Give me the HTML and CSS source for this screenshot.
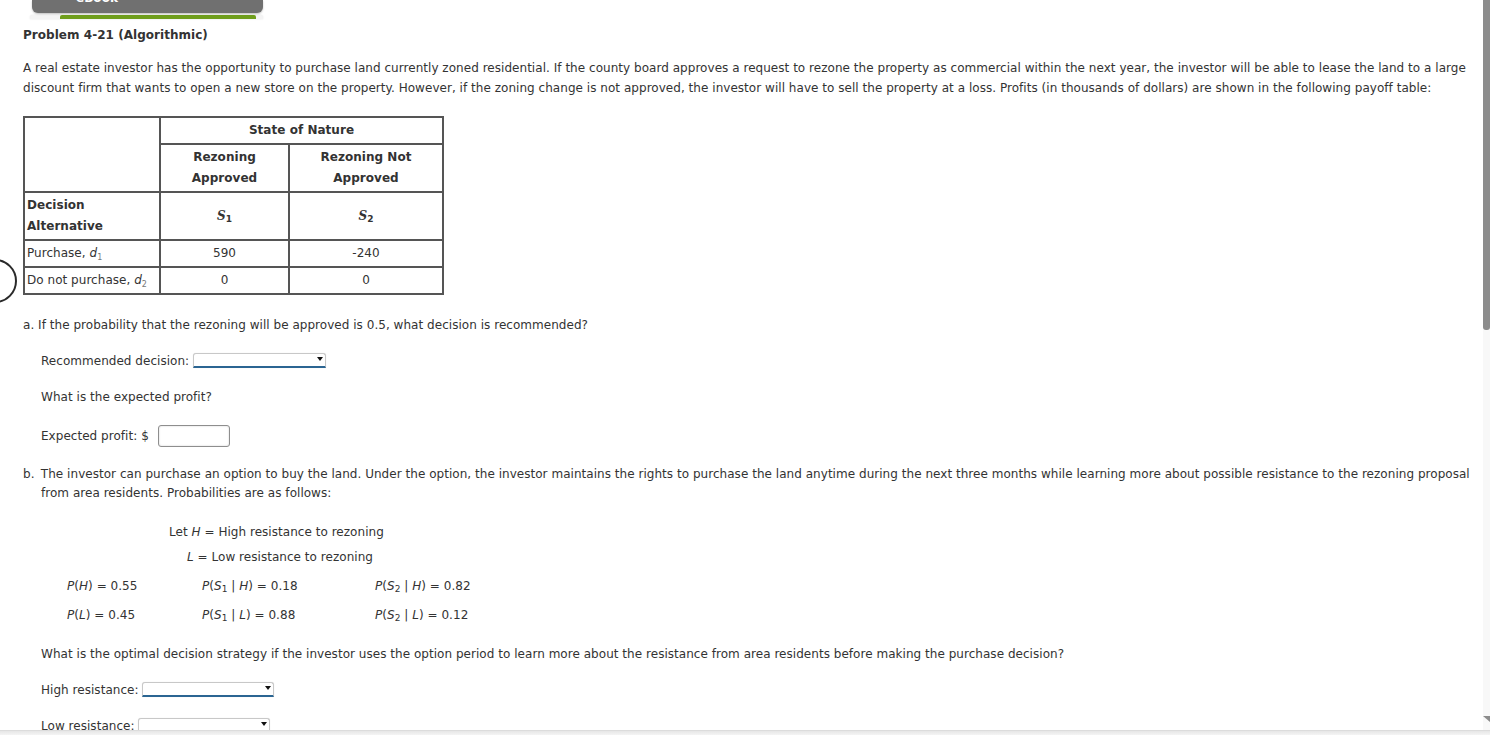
FILE: index.html
```html
<!DOCTYPE html>
<html>
<head>
<meta charset="utf-8">
<link rel="stylesheet" href="styles.css">
</head>
<body>
<div class="topbar">
  <div class="ebook-tab"><span class="ebook-label">eBook</span></div>
  <div class="tab-shelf"><div class="green-bar"></div></div>
</div>
<div class="circle-mark"></div>
<main class="content">
  <h1 class="title">Problem 4-21 (Algorithmic)</h1>
  <p class="intro">A real estate investor has the opportunity to purchase land currently zoned residential. If the county board approves a request to rezone the property as commercial within the next year, the investor will be able to lease the land to a large discount firm that wants to open a new store on the property. However, if the zoning change is not approved, the investor will have to sell the property at a loss. Profits (in thousands of dollars) are shown in the following payoff table:</p>

  <table class="payoff">
    <colgroup><col class="c1"><col class="c2"><col class="c3"></colgroup>
    <tr class="r-short">
      <td rowspan="2"></td>
      <th colspan="2">State of Nature</th>
    </tr>
    <tr class="r-tall">
      <th>Rezoning<br>Approved</th>
      <th>Rezoning Not<br>Approved</th>
    </tr>
    <tr class="r-tall">
      <th class="left">Decision<br>Alternative</th>
      <th><span class="mvar">S</span><sub class="msub">1</sub></th>
      <th><span class="mvar">S</span><sub class="msub">2</sub></th>
    </tr>
    <tr class="r-short">
      <td class="left">Purchase, <i class="dvar">d</i><sub class="dsub">1</sub></td>
      <td>590</td>
      <td>-240</td>
    </tr>
    <tr class="r-short">
      <td class="left">Do not purchase, <i class="dvar">d</i><sub class="dsub">2</sub></td>
      <td>0</td>
      <td>0</td>
    </tr>
  </table>

  <p class="part">a. If the probability that the rezoning will be approved is 0.5, what decision is recommended?</p>
  <div class="indent">
    <p class="q q-rec">Recommended decision: <span class="select sel-rec"></span></p>
    <p class="q q-what">What is the expected profit?</p>
    <p class="q q-exp">Expected profit: $ <span class="textbox"></span></p>
  </div>

  <p class="part part-b"><span class="pl">b.</span> The investor can purchase an option to buy the land. Under the option, the investor maintains the rights to purchase the land anytime during the next three months while learning more about possible resistance to the rezoning proposal from area residents. Probabilities are as follows:</p>

  <div class="defs">
    <p class="def def-h">Let <i>H</i> = High resistance to rezoning</p>
    <p class="def def-l"><i>L</i> = Low resistance to rezoning</p>
  </div>

  <div class="probs">
    <span><i>P</i>(<i>H</i>) = 0.55</span>
    <span><i>P</i>(<i>S</i><sub class="psub">1</sub> | <i>H</i>) = 0.18</span>
    <span><i>P</i>(<i>S</i><sub class="psub">2</sub> | <i>H</i>) = 0.82</span>
    <span><i>P</i>(<i>L</i>) = 0.45</span>
    <span><i>P</i>(<i>S</i><sub class="psub">1</sub> | <i>L</i>) = 0.88</span>
    <span><i>P</i>(<i>S</i><sub class="psub">2</sub> | <i>L</i>) = 0.12</span>
  </div>

  <div class="indent">
    <p class="q q-opt">What is the optimal decision strategy if the investor uses the option period to learn more about the resistance from area residents before making the purchase decision?</p>
    <p class="q q-high">High resistance: <span class="select sel-hl"></span></p>
    <p class="q q-low">Low resistance: <span class="select sel-hl"></span></p>
  </div>
</main>
<div class="vscroll"><div class="vthumb"></div><div class="varrow"></div></div>
<div class="hscroll"></div>
</body>
</html>
```

FILE: styles.css
```css
html, body {
  margin: 0;
  padding: 0;
  background: #ffffff;
}
body {
  font-family: "DejaVu Sans", Verdana, sans-serif;
  font-size: 12px;
  letter-spacing: 0.035px;
  color: #333333;
  overflow: hidden;
  height: 735px;
  position: relative;
}
p { margin: 0; }

.topbar {
  padding-left: 32px;
  height: 19px;
}
.ebook-tab {
  width: 231px;
  height: 13px;
  background: #707070;
  border-radius: 0 0 6px 6px;
  box-shadow: 0 1px 2px rgba(0,0,0,0.25);
  overflow: hidden;
  position: relative;
}
.ebook-label {
  position: absolute;
  left: 44px;
  top: -9px;
  color: #ffffff;
  font-weight: bold;
  font-size: 12px;
}
.tab-shelf {
  width: 233px;
  margin-left: -2px;
  margin-top: 2px;
  height: 4px;
  border-radius: 3px 3px 0 0;
  background: #f4f4f4;
  box-shadow: 0 0 2px rgba(0,0,0,0.12);
}
.green-bar {
  margin-left: 30px;
  width: 196px;
  height: 4px;
  background: #6f9e1c;
  border-radius: 2px 2px 0 0;
}

.circle-mark {
  position: absolute;
  left: -27px;
  top: 259px;
  width: 40px;
  height: 40px;
  border: 2px solid #2a2a2a;
  border-radius: 50%;
}

.content {
  padding: 0 20px 0 23px;
  width: 1450px;
}
.title {
  font-size: 12px;
  font-weight: bold;
  margin: 8px 0 0 0;
  line-height: 17px;
  color: #333;
}
.intro {
  margin-top: 14px;
  line-height: 20px;
}

.payoff {
  margin-top: 18px;
  border-collapse: collapse;
  border: 2px solid #555;
  font-size: 12px;
}
.payoff col.c1 { width: 136px; }
.payoff col.c2 { width: 129px; }
.payoff col.c3 { width: 154px; }
.payoff td, .payoff th {
  border: 2px solid #555;
  padding: 0 3px;
  text-align: center;
  line-height: 21px;
}
.payoff th { font-weight: bold; }
.payoff .left { text-align: left; padding-left: 2px; }
.payoff tr.r-short { height: 27px; }
.payoff tr.r-tall { height: 48px; }
.mvar {
  font-family: "DejaVu Serif", serif;
  font-style: italic;
  font-weight: bold;
  font-size: 12px;
}
.msub {
  font-size: 9px;
  vertical-align: -2px;
  line-height: 0;
}
.dvar { color: #333; }
.dsub {
  font-size: 8px;
  color: #777;
  vertical-align: -3px;
  line-height: 0;
}

.part {
  margin-top: 21px;
  line-height: 19px;
}
.part-b {
  margin-top: 18px;
  padding-left: 18px;
  text-indent: -18px;
}
.pl { display: inline-block; width: 14px; text-indent: 0; }

.indent { padding-left: 18px; }
.q { line-height: 19px; }
.q-rec { margin-top: 17px; }
.q-what { margin-top: 17px; }
.q-exp { margin-top: 18px; }
.q-opt { margin-top: 0; }
.q-high { margin-top: 17px; }
.q-low { margin-top: 17px; }

.select {
  display: inline-block;
  height: 12px;
  vertical-align: -3px;
  border: 1px solid #c8c8c8;
  border-bottom: 2px solid #2b6592;
  border-radius: 3px 3px 0 0;
  background: #fff;
  position: relative;
  box-shadow: 0 0 1px rgba(0,0,0,0.15);
}
.select::after {
  content: "";
  position: absolute;
  right: 2px;
  top: 3px;
  border-left: 3px solid transparent;
  border-right: 3px solid transparent;
  border-top: 4px solid #111;
}
.sel-rec { width: 131px; }
.sel-hl { width: 130px; }

.textbox {
  display: inline-block;
  width: 70px;
  height: 20px;
  vertical-align: -7px;
  border: 1px solid #8e8e8e;
  border-radius: 3px;
  box-shadow: inset 0 0 2px rgba(0,0,0,0.2);
  margin-left: 5px;
}

.defs { margin-top: 20px; }
.def { line-height: 19px; }
.def-h { padding-left: 146px; }
.def-l { padding-left: 164px; margin-top: 6px; }

.probs {
  margin-top: 10px;
  padding-left: 44px;
  display: grid;
  grid-template-columns: 135px 173px auto;
  row-gap: 10px;
  line-height: 19px;
}
.psub {
  font-size: 9px;
  vertical-align: -2px;
  line-height: 0;
}

.probs + .indent { margin-top: 20px; }

.vscroll {
  position: absolute;
  right: 0;
  top: 0;
  width: 7px;
  height: 735px;
  background: #f8f8f8;
}
.vthumb {
  width: 7px;
  height: 330px;
  background: #8c8c8c;
  border-radius: 0 0 3px 3px;
}
.varrow {
  position: absolute;
  right: 0;
  top: 716px;
  border-left: 7px solid transparent;
  border-top: 6px solid #8c8c8c;
}
.hscroll {
  position: absolute;
  left: 0;
  bottom: 0;
  width: 1490px;
  height: 4px;
  background: linear-gradient(#e6e6e6, #f4f4f4);
  border-top: 1px solid #dcdcdc;
}
```
